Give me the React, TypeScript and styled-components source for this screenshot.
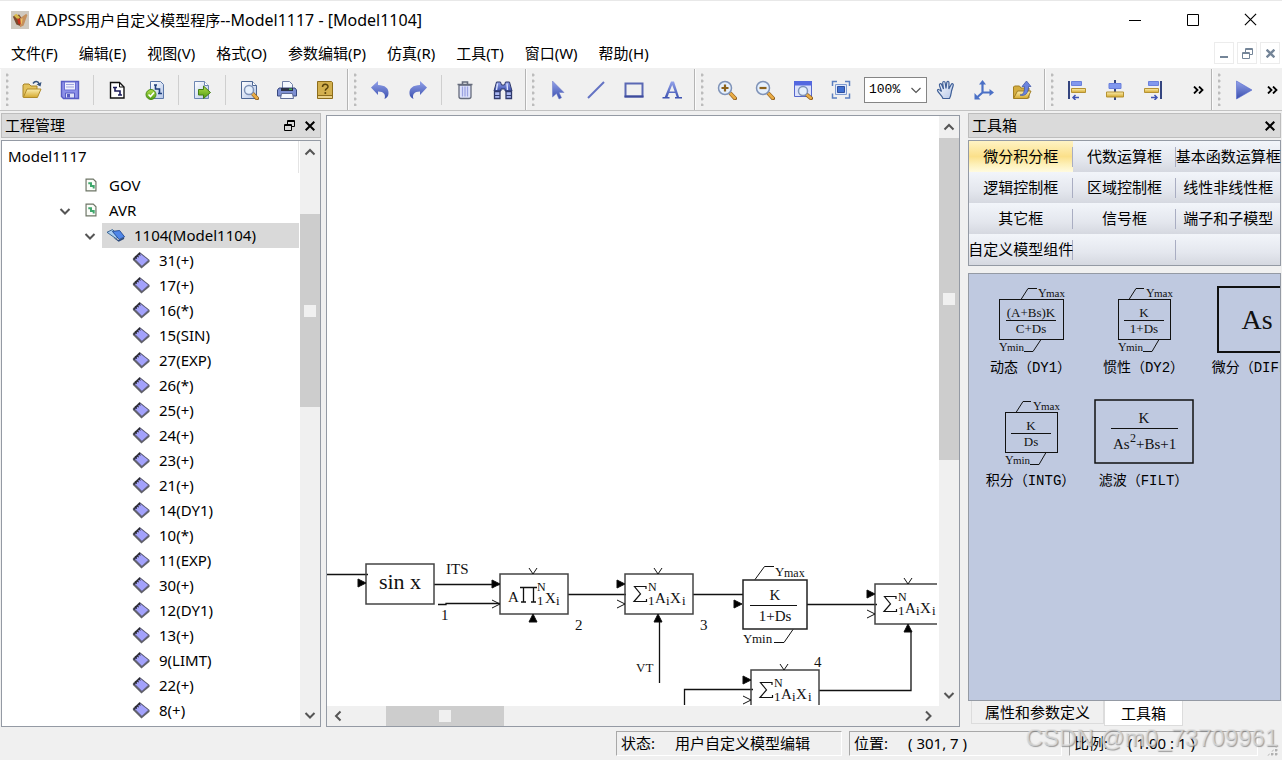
import React from 'react';
import styled, { createGlobalStyle, css } from 'styled-components';

const ui = '"Noto Sans", "Noto Sans CJK SC", sans-serif';
const mono = '"Liberation Mono", "Noto Sans CJK SC", monospace';
const serif = '"Liberation Serif", "Noto Sans CJK SC", serif';

const GlobalStyle = createGlobalStyle`
  *, *::before, *::after { box-sizing: border-box; }
  html, body, #root { height: 100%; }
  body { margin: 0; background: #f0f0f0; color: #000; font: 15px/20px ${ui}; }
  button { font: inherit; color: inherit; padding: 0; border: 0; background: none; }
  ul { list-style: none; margin: 0; padding: 0; }
`;

/* ---------- shell ---------- */

const Window = styled.div`
  display: flex;
  flex-direction: column;
  height: 100%;
  min-width: 960px;
  overflow: hidden;
`;

const TitleBar = styled.header`
  display: flex;
  align-items: center;
  flex: none;
  height: 40px;
  padding: 0 6px 2px 11px;
  gap: 7px;
  background: #fff;
  border-top: 1px solid #e8e8e8;
`;

const Title = styled.h1`
  flex: 1;
  margin: 0;
  font-size: 16px;
  font-weight: 400;
  white-space: nowrap;
`;

const TitleHan = styled.span`
  font-size: 15px;
`;

const CaptionButton = styled.button`
  display: flex;
  align-items: center;
  justify-content: center;
  width: 51px;
  height: 36px;
`;

const MenuBar = styled.nav`
  display: flex;
  align-items: center;
  flex: none;
  height: 29px;
  padding: 0 2px 2px 0;
  background: #fff;
  border-bottom: 1px solid #f0f0f0;
`;

const MenuItem = styled.button`
  padding: 0 11px 0 10px;
  white-space: nowrap;
  &:first-child { padding-left: 11px; }
`;

const MdiButtons = styled.div`
  display: flex;
  gap: 3px;
  margin-left: auto;
`;

const MdiButton = styled.button`
  display: flex;
  align-items: center;
  justify-content: center;
  width: 20px;
  height: 22px;
  border: 1px solid #ececec;
`;

/* ---------- tool bar ---------- */

const ToolBar = styled.div`
  display: flex;
  flex: none;
  height: 42px;
  background: #f0f0f0;
  border-bottom: 1px solid #c2c2c2;
`;

const ToolGroup = styled.div<{ $fill?: boolean; $last?: boolean }>`
  display: flex;
  align-items: center;
  flex: ${p => (p.$fill ? '1' : 'none')};
  padding-right: ${p => (p.$last ? '0' : '3px')};
  border-right: ${p => (p.$last ? '0' : '1px solid #b4b4b4')};
  border-left: 1px solid #fbfbfb;
`;

const Grip = styled.span`
  width: 3px;
  height: 33px;
  margin: 0 4px 0 5px;
  background: radial-gradient(circle at 1px 2px, #bcbcbc 1px, transparent 2px) 0 0 / 3px 6px;
`;

const ToolButton = styled.button`
  display: flex;
  align-items: center;
  justify-content: center;
  width: 38px;
  height: 36px;
`;

const ToolDivider = styled.span`
  width: 1px;
  height: 30px;
  margin: 0 4px;
  background: #cfcfcf;
`;

const Extension = styled.button`
  display: flex;
  align-items: center;
  justify-content: center;
  width: 19px;
  height: 36px;
  margin-left: auto;
`;

const ZoomField = styled.label`
  display: grid;
  align-items: center;
  width: 63px;
  height: 26px;
  margin: 0 0 0 4px;
  background: #fff;
  border: 1px solid #858585;
  > * { grid-area: 1 / 1; }
  svg { justify-self: end; margin-right: 4px; pointer-events: none; }
`;

const ZoomSelect = styled.select`
  appearance: none;
  width: 100%;
  height: 24px;
  padding: 0 20px 0 4px;
  border: 0;
  background: transparent;
  color: #000;
  font: 13px/20px ${mono};
`;

/* ---------- docks ---------- */

const Workspace = styled.main`
  display: grid;
  grid-template-columns: 320px minmax(0, 1fr) 313px;
  flex: 1;
  min-height: 0;
  padding: 2px 1px 0;
`;

const Dock = styled.section`
  display: flex;
  flex-direction: column;
  min-width: 0;
  min-height: 0;
`;

const DockHeader = styled.header`
  display: flex;
  align-items: center;
  flex: none;
  gap: 10px;
  height: 25px;
  padding: 0 5px 0 3px;
  margin-bottom: 2px;
  background: #dadada;
  border: 1px solid #bdbdbd;
`;

const DockTitle = styled.h2`
  flex: 1;
  margin: 0;
  padding-bottom: 2px;
  font-size: 15px;
  font-weight: 400;
`;

const DockButton = styled.button`
  display: flex;
`;

const frame = css`
  border: 1px solid #949aa4;
`;

const TreeFrame = styled.div`
  display: flex;
  flex: 1;
  min-height: 0;
  background: #fff;
  ${frame}
`;

const TreeBody = styled.div`
  flex: 1;
  min-width: 0;
  padding-right: 1px;
  overflow: hidden;
`;

const TreeHeading = styled.div`
  height: 32px;
  padding: 5px 6px;
  border-right: 1px solid #e4e4e4;
`;

const TreeRow = styled.li<{ $level: number }>`
  display: flex;
  height: 25px;
  padding-left: ${p => p.$level * 25 + 25}px;
`;

const Expander = styled.span`
  display: flex;
  align-items: center;
  justify-content: center;
  width: 25px;
`;

const TreeNode = styled.button<{ $selected?: boolean }>`
  display: flex;
  align-items: center;
  flex: 1;
  gap: 4px;
  padding-bottom: 1px;
  background: ${p => (p.$selected ? '#d9d9d9' : 'transparent')};
`;

const NodeIcon = styled.span`
  display: flex;
  justify-content: center;
  width: 28px;
`;

/* ---------- scroll bars ---------- */

const Bar = styled.div<{ $horizontal?: boolean }>`
  display: flex;
  flex: none;
  flex-direction: ${p => (p.$horizontal ? 'row' : 'column')};
  ${p => (p.$horizontal ? 'height: 20px;' : 'width: 20px;')}
  background: #f0f0f0;
`;

const BarButton = styled.button`
  display: flex;
  align-items: center;
  justify-content: center;
  flex: 0 0 22px;
`;

const BarSpace = styled.span<{ $part: number }>`
  flex: ${p => p.$part} 1 0;
`;

const BarThumb = styled(BarSpace)`
  display: flex;
  align-items: center;
  justify-content: center;
  background: #cdcdcd;
  &::after {
    content: '';
    width: 12px;
    height: 12px;
    background: #f0f0f0;
  }
`;

/* ---------- diagram ---------- */

const CanvasFrame = styled.section`
  display: grid;
  grid-template: minmax(0, 1fr) 20px / minmax(0, 1fr) 20px;
  margin: 2px 8px 0 5px;
  min-height: 0;
  background: #fff;
  ${frame}
`;

const Sheet = styled.div`
  overflow: hidden;
  min-height: 0;
  svg { display: block; }
`;

const Corner = styled.span`
  background: #f0f0f0;
`;

/* ---------- toolbox ---------- */

const CategoryGrid = styled.div`
  display: grid;
  grid-template-columns: repeat(3, minmax(0, 1fr));
  grid-auto-rows: 31px;
  flex: none;
  ${frame}
`;

const plain = 'linear-gradient(#f2f5fa, #e4e7ee 60%, #d5d8e0)';
const lit = 'linear-gradient(#fff3c4, #fbe08a 50%, #fdf0b8 75%, #fffbe0)';

const Category = styled.button<{ $active?: boolean }>`
  display: flex;
  align-items: center;
  justify-content: center;
  padding-bottom: 2px;
  white-space: nowrap;
  background: ${p => (p.$active ? lit : plain)};
  &:not(:nth-child(3n)) {
    background:
      linear-gradient(#a9adc2, #a9adc2) right center / 1px 20px no-repeat,
      ${p => (p.$active ? lit : plain)};
  }
`;

const Palette = styled.div`
  display: grid;
  grid-template-columns: repeat(3, 113px);
  align-content: start;
  row-gap: 21px;
  flex: 1;
  min-height: 0;
  margin-top: 7px;
  padding: 12px 0 0 5px;
  overflow: hidden;
  background: #bfc9e0;
  ${frame}
`;

const PaletteItem = styled.button`
  display: flex;
  flex-direction: column;
  align-items: center;
  gap: 4px;
  font: 14px/20px ${mono};
  white-space: nowrap;
`;

const Tabs = styled.div`
  display: flex;
  align-items: flex-start;
  flex: none;
  height: 26px;
  padding-left: 3px;
`;

const Tab = styled.button<{ $active?: boolean }>`
  height: ${p => (p.$active ? '25px' : '23px')};
  padding: ${p => (p.$active ? '0 16px' : '0 13px')};
  background: ${p => (p.$active ? '#fff' : '#f0f0f0')};
  border: 1px solid #dcdcdc;
  border-top: 0;
`;

/* ---------- status bar ---------- */

const StatusBar = styled.footer`
  position: relative;
  display: flex;
  justify-content: flex-end;
  align-items: flex-start;
  flex: none;
  height: 33px;
  padding: 4px 24px 0 0;
  gap: 7px;
`;

const StatusPane = styled.div<{ $width: number }>`
  display: flex;
  gap: 20px;
  width: ${p => p.$width}px;
  height: 25px;
  padding: 1px 4px;
  white-space: nowrap;
  border: 1px solid #fff;
  border-top-color: #a8a8a8;
  border-left-color: #a8a8a8;
`;

const Watermark = styled.span`
  position: absolute;
  right: 4px;
  top: -2px;
  font: 24px/26px "Liberation Sans", sans-serif;
  color: rgba(224, 224, 224, 0.7);
  text-shadow: 1px 1px 1px rgba(120, 120, 120, 0.7);
  white-space: nowrap;
`;

const SizeGrip = styled.span`
  position: absolute;
  right: 4px;
  bottom: 4px;
  width: 11px;
  height: 11px;
  background: radial-gradient(circle at 1px 1px, #b0b0b0 1px, transparent 2px) 0 0 / 4px 4px;
  clip-path: polygon(100% 0, 100% 100%, 0 100%);
`;

/* ---------- icons ---------- */

const HiddenDefs = styled.svg`
  position: absolute;
`;

const Gradients = () => (
  <HiddenDefs width="0" height="0" aria-hidden="true">
    <defs>
      <linearGradient id="blue" x1="0" y1="0" x2="0" y2="1">
        <stop offset="0" stopColor="#93a2ea" />
        <stop offset="1" stopColor="#3a4fae" />
      </linearGradient>
      <linearGradient id="gold" x1="0" y1="0" x2="0" y2="1">
        <stop offset="0" stopColor="#fbeeb0" />
        <stop offset="1" stopColor="#d5a92e" />
      </linearGradient>
      <linearGradient id="paper" x1="0" y1="0" x2="1" y2="1">
        <stop offset="0" stopColor="#ffffff" />
        <stop offset="1" stopColor="#b4c6e8" />
      </linearGradient>
      <linearGradient id="green" x1="0" y1="0" x2="0" y2="1">
        <stop offset="0" stopColor="#b2e04a" />
        <stop offset="1" stopColor="#4e9a12" />
      </linearGradient>
    </defs>
  </HiddenDefs>
);

const Lens = ({ x, y, r, children }: { x: number; y: number; r: number; children?: React.ReactNode }) => (
  <>
    <path d={`M${x + r - 1} ${y + r - 1}L18 18.3`} stroke="#8a5a1c" strokeWidth="4" strokeLinecap="round" />
    <path d={`M${x + r - 1} ${y + r - 1}L17.8 18`} stroke="#e9ac45" strokeWidth="2.6" strokeLinecap="round" />
    <circle cx={x} cy={y} r={r} fill="#e6f0fc" stroke="#7f93b8" strokeWidth="1.5" />
    {children}
  </>
);

const glyphs: Record<string, React.ReactNode> = {
  open: (
    <>
      <path d="M1 17V5l1-1h5l2 2h6v3" fill="#e3c25c" stroke="#a88427" />
      <path d="M1.3 17.5 5 9h14l-3.6 8.5z" fill="url(#gold)" stroke="#b08b2a" />
      <path d="M11 3.5c2-3 5-2.500 6.200.5" fill="none" stroke="#34527e" strokeWidth="1.500" />
      <path d="m19.500 2-1 4.500-4-2z" fill="#34527e" />
    </>
  ),
  save: (
    <>
      <path d="M1.500 1.500h17v17h-15l-2-2z" fill="#8c90e8" stroke="#575cc4" strokeWidth="1.400" />
      <path d="M4.500 2h11v8h-11z" fill="#eef0fc" stroke="#6b70d2" />
      <path d="M6 4.500h8M6 7h8" stroke="#a0a5df" />
      <path d="M5.500 13h9v5h-9z" fill="#dfe2f8" stroke="#575cc4" />
      <path d="M7 14h3v3.500H7z" fill="#575cc4" />
    </>
  ),
  model: (
    <>
      <path d="M3.500 2.500h9l4.500 4.500v11H3.500z" fill="#fff" stroke="#111" strokeWidth="1.400" />
      <path d="M12.500 2.500V7H17" fill="none" stroke="#111" />
      <path d="M6 7.500h4M8 7.500v3.500h5v4M11 15h4" fill="none" stroke="#1c1c5c" strokeWidth="1.600" />
    </>
  ),
  check: (
    <>
      <path d="M5.500 1.500h10l3 3v14h-13z" fill="url(#paper)" stroke="#5b77a8" />
      <path d="M9 5h3M10.500 5v4h4v4M13 13.500h4" fill="none" stroke="#20407c" strokeWidth="1.600" />
      <circle cx="6" cy="14.500" r="5" fill="url(#green)" stroke="#4b8c1c" />
      <path d="m3.500 14.500 2 2 3.500-4" fill="none" stroke="#fff" strokeWidth="1.600" />
    </>
  ),
  export: (
    <>
      <path d="M2.500 1.500h10l4 4v13h-14z" fill="url(#paper)" stroke="#6d86b3" />
      <path d="M12.500 1.500v4h4" fill="#fff" stroke="#6d86b3" />
      <path d="M6.500 9.500h5V6l7 6.500-7 6V15h-5z" fill="url(#green)" stroke="#437d14" />
    </>
  ),
  preview: (
    <>
      <path d="M2.500 1.500h11l4 4v13h-15z" fill="url(#paper)" stroke="#4d6794" />
      <path d="M13.500 1.500v4h4" fill="#fff" stroke="#4d6794" />
      <Lens x={10} y={10} r={4.5} />
    </>
  ),
  print: (
    <>
      <path d="M5.500 8V1.500h7l3 3V8" fill="#f4f7ff" stroke="#7280a8" />
      <path d="M2 8h16l1.500 2v6h-19v-6z" fill="#7d8fd2" stroke="#39497f" />
      <path d="M4 8h12v3H4z" fill="#2c3247" />
      <path d="M12 9.200h3" stroke="#50e060" />
      <path d="M4.500 13.500h11l1 5h-13z" fill="#f4f7ff" stroke="#5c6a96" />
    </>
  ),
  help: (
    <>
      <path d="M2.500 1.500h14l1 1v16h-15z" fill="#d3b04e" stroke="#8d6d1b" />
      <path d="M3 15.500h14" stroke="#8d6d1b" />
      <path d="M3 17h14" stroke="#fff0bf" />
      <path d="M7.500 7c0-3.500 5.500-3.500 5.500-.3 0 2-2.700 2-2.700 4" fill="none" stroke="#5a430b" strokeWidth="1.500" />
      <circle cx="10.300" cy="13" r="1" fill="#5a430b" />
    </>
  ),
  undo: <path d="M1 7.500 8 1v4c7 0 11 3.500 10.500 8.500 0 2.500-1.500 4.500-4 5.500 1.500-4-.5-7.500-6.500-7.500V15z" fill="url(#blue)" />,
  redo: <path d="M19 7.500 12 1v4C5 5 1 8.500 1.500 13.500c0 2.500 1.500 4.500 4 5.500-1.500-4 .5-7.500 6.500-7.500V15z" fill="url(#blue)" />,
  trash: (
    <>
      <path d="M4 5h12v11.500q0 2-2 2H6q-2 0-2-2z" fill="#dfe3fb" stroke="#666c7c" strokeWidth="1.300" />
      <path d="M7.500 6.500v10M10 6.500v10M12.500 6.500v10" stroke="#9aa2e0" strokeWidth="1.300" />
      <path d="M2.500 4.500h15M7.500 4V2h5v2" fill="none" stroke="#666c7c" strokeWidth="1.600" />
    </>
  ),
  find: (
    <>
      <path d="M3.500 2h4l1 3h3l1-3h4l2.500 9H12V9H8v2H1z" fill="url(#blue)" stroke="#303a6c" />
      <path d="M1.500 11.500H7v7H1.500zM13 11.500h5.500v7H13z" fill="#a9b6f2" stroke="#303a6c" strokeWidth="1.300" />
      <path d="M4.500 3.500 3.500 10M14 3.500l.5 6.500" stroke="#dde3ff" strokeWidth="1.400" />
      <path d="M1.500 15.500H7M13 15.500h5.500" stroke="#303a6c" />
    </>
  ),
  pointer: <path d="M4.500 1v16l4-3.500 2.500 5.500 2.500-1.200-2.500-5.300h5z" fill="url(#blue)" stroke="#6877c4" strokeWidth=".5" />,
  line: <path d="M2 18 18 2" stroke="#6372c3" strokeWidth="2" />,
  rect: (
    <>
      <path d="M1.500 3.500h17v13h-17z" fill="none" stroke="#5a68b4" strokeWidth="2" />
      <path d="M.5 16.500h19" stroke="#3d4b9c" strokeWidth="2" />
    </>
  ),
  letter: <path d="M9 1.500h3l5 15.500H20v1.500h-7V17h1.700L13.300 13H7l-1.500 4h2v1.500H.5V17h2.300zM10.200 5 7.500 11.500h5.200z" fill="url(#blue)" />,
  zoomIn: (
    <Lens x={8} y={8} r={6.5}>
      <path d="M4.500 8h7M8 4.500v7" stroke="#8c621c" strokeWidth="2.200" />
    </Lens>
  ),
  zoomOut: (
    <Lens x={8} y={8} r={6.5}>
      <path d="M4.500 8h7" stroke="#8c621c" strokeWidth="2.200" />
    </Lens>
  ),
  zoomPage: (
    <>
      <path d="M1.500 1.500h17v15h-17z" fill="#dce2fb" stroke="#5566cc" />
      <path d="M1 1h18v4.500H1z" fill="#5468e0" />
      <Lens x={10} y={11} r={4.5} />
    </>
  ),
  fit: (
    <>
      <path d="M4.500 4.500h11v10h-11z" fill="#dfe9fb" stroke="#7f9bd0" />
      <path d="M6.500 6.500h7v6h-7z" fill="#3f6fd0" stroke="#2f4f9e" />
      <path d="M1.500 6V1.500H6M14 1.500h4.500V6M18.500 13.500V18H14M6 18H1.500v-4.500" fill="none" stroke="#5b7fc0" strokeWidth="1.500" />
    </>
  ),
  hand: (
    <path
      d="M7 18.500c-1-3-5-6-5.500-8 0-1.500 1.500-1.500 4 1L3.500 5.500c-.5-2 1.500-2.500 2.200-.8L7.500 9 6.700 3c0-2 2.300-2 2.500 0L10 8.500l.8-6c.3-1.800 2.300-1.500 2.200.3L12.800 9l2.400-4.500c.9-1.500 2.500-.6 2 1L15.500 11c-.5 3-.5 5-2 7.500z"
      fill="url(#paper)"
      stroke="#3f5f97"
      strokeWidth="1.200"
    />
  ),
  axes: (
    <g fill="#4b70c6" stroke="#4b70c6">
      <path d="M8.500 4v8.500H16M8.500 12.500 3.500 17" fill="none" strokeWidth="2.200" />
      <path d="M8.500 0 12 4.500H5zM20 12.500 15.500 16V9zM.5 19.500v-6.500l6 6.500z" stroke="none" />
    </g>
  ),
  loadUp: (
    <>
      <path d="M1.500 18V7l1-1h5l1.500 2h8v10z" fill="#d4ad3f" stroke="#a17e22" />
      <path d="m1.500 18.500 4-7.500H19l-3.500 7.500z" fill="url(#gold)" stroke="#a17e22" />
      <path d="M8 15c3.500 0 4.500-3 4.500-8.500H10L14.500 1 19 6.500h-2.500C16.500 13.500 13 16.500 8 15z" fill="#6b84de" stroke="#3a50a4" strokeWidth=".7" />
    </>
  ),
  alignLeft: (
    <>
      <path d="M2 1v18" stroke="#34457f" strokeWidth="2" />
      <path d="M4.500 1.500h10v4h-10z" fill="#8198ee" stroke="#6a80dc" />
      <path d="M4.500 8.500h14v4h-14z" fill="url(#gold)" stroke="#b59232" />
      <path d="M12 17.500H6M8.500 15 6 17.500 8.500 20" fill="none" stroke="#3f55b4" strokeWidth="1.500" />
    </>
  ),
  alignCenter: (
    <>
      <path d="M10 0v20" stroke="#34457f" strokeWidth="2" />
      <path d="M4 3.500h12v5H4z" fill="#8198ee" stroke="#6a80dc" />
      <path d="M1.500 12h17v5h-17z" fill="url(#gold)" stroke="#b59232" />
    </>
  ),
  alignRight: (
    <>
      <path d="M18 1v18" stroke="#34457f" strokeWidth="2" />
      <path d="M5.500 1.500h10v4h-10z" fill="#8198ee" stroke="#6a80dc" />
      <path d="M1.500 8.500h14v4h-14z" fill="url(#gold)" stroke="#b59232" />
      <path d="M8 17.500h6M11.500 15l2.500 2.500-2.500 2.500" fill="none" stroke="#3f55b4" strokeWidth="1.500" />
    </>
  ),
  play: <path d="M2.500 1 18 10 2.500 19z" fill="url(#blue)" stroke="#5468d0" strokeWidth=".6" />,
  app: (
    <>
      <path d="M0 0h20v20H0z" fill="#cfc9bf" />
      <path d="m2 6 7-2 3 4-1 9-5-2z" fill="#7a4a2c" />
      <path d="m10 8 7-5 1 2-4 11-4 2z" fill="#c5905c" />
      <path d="m3 5 3-2 4 4-2 3z" fill="#d9b94c" />
      <path d="m7 8 3 1 1 6-3-1z" fill="#c8301c" />
      <path d="m11 9 2-1-1 6-1 1z" fill="#f0c060" />
    </>
  ),
  page: (
    <>
      <path d="M4.500 3.500h8l3 3v10h-11z" fill="#fbfdf9" stroke="#6c7465" strokeWidth="1.300" />
      <path d="M7 8h3v3h3v3" fill="none" stroke="#3fa76c" strokeWidth="2.200" />
    </>
  ),
  books: (
    <>
      <path d="m0 7 6-3 8 7-4 3z" fill="#a8cdf0" stroke="#2e5a8c" />
      <path d="m6 6 8-1 5.500 7-6 3z" fill="#4f86e8" stroke="#23488f" />
      <path d="m7 13 6 2.500 6-3v2l-6 3z" fill="#2c4a7c" />
    </>
  ),
  block: (
    <>
      <path d="M8.500 1 1 8v2l9.500 9.500L19.500 12v-2z" fill="#606068" />
      <path d="M9 2.500 18.500 10 11 17 2.500 8.500z" fill="#a3a2fb" stroke="#5a5a78" strokeWidth=".8" />
      <path d="m3.500 6 1.800 2.500M5.500 4.500l1.800 2.500M7.500 2.500l1.800 2.500M2 9.500 9 2" stroke="#26262c" strokeWidth="1.200" />
    </>
  ),
};

const Icon = ({ name, size = 20 }: { name: string; size?: number }) => (
  <svg width={size} height={size} viewBox="0 0 20 20" fill="none" aria-hidden="true">
    {glyphs[name]}
  </svg>
);

const angles = { up: 'M1.500 8.500 6 4l4.500 4.500', down: 'M1.500 4 6 8.500 10.500 4', left: 'M8.500 1.500 4 6l4.500 4.500', right: 'M4 1.500 8.500 6 4 10.500' };

const Chevron = ({ to, weight = 2 }: { to: keyof typeof angles; weight?: number }) => (
  <svg width="12" height="12" viewBox="0 0 12 12" fill="none" aria-hidden="true">
    <path d={angles[to]} stroke="#555" strokeWidth={weight} />
  </svg>
);

const CloseMark = ({ size = 10, color = '#000', weight = 2 }: { size?: number; color?: string; weight?: number }) => (
  <svg width={size} height={size} viewBox="0 0 10 10" aria-hidden="true">
    <path d="m.7.7 8.600 8.600M9.300.7.700 9.300" stroke={color} strokeWidth={weight} />
  </svg>
);

const RestoreMark = ({ color = '#000' }: { color?: string }) => (
  <svg width="11" height="11" viewBox="0 0 11 11" fill="none" stroke={color} aria-hidden="true">
    <path d="M3.500 4V.5h7v6H8" />
    <path d="M3 1.500h8M.5 4.500h7v6h-7zM0 5.500h8" />
  </svg>
);

const MoreMark = () => (
  <svg width="11" height="8" viewBox="0 0 11 8" fill="none" aria-hidden="true">
    <path d="m1 .5 3.500 3.500L1 7.500M6 .5 9.500 4 6 7.500" stroke="#000" strokeWidth="1.800" />
  </svg>
);

const ScrollBar = ({ parts, horizontal }: { parts: [number, number, number]; horizontal?: boolean }) => (
  <Bar $horizontal={horizontal}>
    <BarButton aria-label={horizontal ? '向左' : '向上'}><Chevron to={horizontal ? 'left' : 'up'} /></BarButton>
    <BarSpace $part={parts[0]} />
    <BarThumb $part={parts[1]} />
    <BarSpace $part={parts[2]} />
    <BarButton aria-label={horizontal ? '向右' : '向下'}><Chevron to={horizontal ? 'right' : 'down'} /></BarButton>
  </Bar>
);

/* ---------- diagram parts ---------- */

const Drawing = styled.svg`
  fill: none;
  stroke: #111;
  font-family: ${serif};
  text {
    fill: #111;
    stroke: none;
  }
`;

const T = ({ x, y, s, mid, children }: { x: number; y: number; s: number; mid?: boolean; children: string }) => (
  <text x={x} y={y} fontSize={s} textAnchor={mid ? 'middle' : 'start'}>{children}</text>
);

const Solid = ({ x, y }: { x: number; y: number }) => <path d={`M${x - 8} ${y - 4}L${x} ${y}l-8 4z`} fill="#000" />;
const Open = ({ x, y }: { x: number; y: number }) => <path d={`M${x - 8} ${y - 4}L${x} ${y}l-8 4`} />;
const UpSolid = ({ x, y }: { x: number; y: number }) => <path d={`M${x} ${y}l4 8h-8z`} fill="#000" />;
const DownOpen = ({ x, y }: { x: number; y: number }) => <path d={`M${x - 4} ${y - 6}l4 6 4-6`} />;

const OpBlock = ({ x, y, product, up = true }: { x: number; y: number; product?: boolean; up?: boolean }) => (
  <g transform={`translate(${x} ${y})`}>
    <rect width="68" height="40" stroke="#444" strokeWidth="1.500" />
    <DownOpen x={33} y={0} />
    {up && <UpSolid x={33} y={40} />}
    <Solid x={0} y={10} />
    <Open x={0} y={30} />
    {product ? (
      <>
        <T x={8} y={28} s={15}>A</T>
        <path d="M20 13.500h17M23.500 13.500V28M33.500 13.500V28M21 28h5M31 28h5" strokeWidth="1.300" />
        <T x={37} y={17} s={12}>N</T>
        <T x={37} y={31} s={13}>1</T>
        <T x={45} y={29} s={15}>X</T>
        <T x={56} y={31} s={13}>i</T>
      </>
    ) : (
      <>
        <path d="M21 15v-2.500H9.500L15.500 20 9 27.500h12.500V25" strokeWidth="1.200" />
        <T x={23} y={17} s={12}>N</T>
        <T x={23} y={31} s={13}>1</T>
        <T x={30} y={29} s={15}>A</T>
        <T x={41} y={31} s={13}>i</T>
        <T x={45} y={29} s={15}>X</T>
        <T x={57} y={31} s={13}>i</T>
      </>
    )}
  </g>
);

const Diagram = () => (
  <Drawing width="610" height="589" viewBox="327 116 610 589" role="img" aria-label="Model1104">
    <path d="M327 574.500h41M434 584.500h66M438 604.500h8v-1h54M568 594.500h58M693 594.500h50M807 604.500h70M819 690.500h92V632M684.500 706v-16.500H753M659.500 683v-61" strokeWidth="1.300" />
    <rect x="366" y="564" width="68" height="40" stroke="#444" strokeWidth="1.500" />
    <Solid x={366} y={583} />
    <T x={400} y={589} s={22} mid>sin x</T>
    <T x={446} y={574} s={15}>ITS</T>
    <T x={441} y={620} s={15}>1</T>
    <OpBlock x={500} y={574} product />
    <T x={575} y={630} s={15}>2</T>
    <OpBlock x={625} y={574} />
    <T x={700} y={630} s={15}>3</T>
    <T x={636} y={672} s={13}>VT</T>
    <rect x="743" y="580" width="64" height="49" stroke="#222" strokeWidth="1.500" />
    <Solid x={742} y={604} />
    <path d="M755 579.500 764.500 566.500H774M774 642.500h10l9-13" />
    <T x={775} y={576} s={13}>Y</T>
    <T x={784} y={577} s={12}>max</T>
    <T x={775} y={600} s={15} mid>K</T>
    <path d="M750 605.500h47" />
    <T x={775} y={621} s={15} mid>1+Ds</T>
    <T x={743} y={643} s={13}>Y</T>
    <T x={752} y={643} s={13}>min</T>
    <OpBlock x={875} y={584} />
    <OpBlock x={751} y={670} up={false} />
    <T x={814} y={667} s={15}>4</T>
  </Drawing>
);

const Limited = ({ left, right, top, bottom }: { left: number; right: number; top: string; bottom: string }) => (
  <Drawing width="100" height="68" viewBox="0 0 100 68" aria-hidden="true">
    <rect x={left + 0.5} y="13.500" width={right - left} height="40" />
    <path d={`M${left + 11} 13.500 ${left + 18} 2.500h8M${left + 25} 65.500h9l7-12`} transform={left < 20 ? 'translate(0 0)' : undefined} />
    <path d={`M${left + 6} 34.500H${right - 6}`} />
    <T x={left + 28} y={11} s={12}>Y</T>
    <T x={left + 36} y={11} s={11}>max</T>
    <T x={left} y={65} s={12}>Y</T>
    <T x={left + 8} y={65} s={11}>min</T>
    <T x={(left + right) / 2} y={31} s={13} mid>{top}</T>
    <T x={(left + right) / 2} y={47} s={13} mid>{bottom}</T>
  </Drawing>
);

const WideLimited = () => (
  <Drawing width="100" height="68" viewBox="0 0 100 68" aria-hidden="true">
    <rect x="18.500" y="13.500" width="64" height="40" />
    <path d="M40 13.500 47 2.500h9M43 65.500h9l8-12M25 34.500h50" />
    <T x={57} y={11} s={12}>Y</T>
    <T x={65} y={11} s={11}>max</T>
    <T x={18} y={65} s={12}>Y</T>
    <T x={26} y={65} s={11}>min</T>
    <T x={50} y={31} s={13} mid>(A+Bs)K</T>
    <T x={50} y={47} s={13} mid>C+Ds</T>
  </Drawing>
);

const paletteItems = [
  { label: '动态（DY1）', art: <WideLimited /> },
  { label: '惯性（DY2）', art: <Limited left={24} right={76} top="K" bottom="1+Ds" /> },
  {
    label: '微分（DIFF）',
    art: (
      <Drawing width="100" height="68" viewBox="0 0 100 68" aria-hidden="true">
        <rect x="11" y="1" width="78" height="65" strokeWidth="2" />
        <T x={50} y={43} s={28} mid>As</T>
      </Drawing>
    ),
  },
  { label: '积分（INTG）', art: <Limited left={24} right={76} top="K" bottom="Ds" /> },
  {
    label: '滤波（FILT）',
    art: (
      <Drawing width="100" height="68" viewBox="0 0 100 68" aria-hidden="true">
        <rect x="1" y="1" width="98" height="63" strokeWidth="1.500" />
        <T x={50} y={24} s={15} mid>K</T>
        <path d="M17 29.500h67" />
        <T x={19} y={50} s={15}>As</T>
        <T x={36} y={43} s={12}>2</T>
        <T x={42} y={50} s={15}>+Bs+1</T>
      </Drawing>
    ),
  },
];

/* ---------- data ---------- */

const menus = ['文件(F)', '编辑(E)', '视图(V)', '格式(O)', '参数编辑(P)', '仿真(R)', '工具(T)', '窗口(W)', '帮助(H)'];

const toolGroups = [
  ['open', 'save', '|', 'model', 'check', '|', 'export', '|', 'preview', 'print', 'help'],
  ['undo', 'redo', '|', 'trash', 'find'],
  ['pointer', 'line', 'rect', 'letter'],
];

const blocks = [
  '31(+)', '17(+)', '16(*)', '15(SIN)', '27(EXP)', '26(*)', '25(+)', '24(+)', '23(+)', '21(+)',
  '14(DY1)', '10(*)', '11(EXP)', '30(+)', '12(DY1)', '13(+)', '9(LIMT)', '22(+)', '8(+)',
];

type Node = { label: string; level: number; icon: string; open?: boolean; selected?: boolean };

const tree: Node[] = [
  { label: 'GOV', level: 1, icon: 'page' },
  { label: 'AVR', level: 1, icon: 'page', open: true },
  { label: '1104(Model1104)', level: 2, icon: 'books', open: true, selected: true },
  ...blocks.map(label => ({ label, level: 3, icon: 'block' })),
];

const categories = [
  '微分积分框', '代数运算框', '基本函数运算框', '逻辑控制框', '区域控制框', '线性非线性框',
  '其它框', '信号框', '端子和子模型', '自定义模型组件', '', '',
];

const Tools = ({ names }: { names: string[] }) => (
  <>
    {names.map((name, i) =>
      name === '|' ? <ToolDivider key={i} /> : <ToolButton key={i} aria-label={name}><Icon name={name} /></ToolButton>
    )}
  </>
);

export default function App() {
  return (
    <Window>
      <GlobalStyle />
      <Gradients />
      <TitleBar>
        <Icon name="app" size={18} />
        <Title>ADPSS<TitleHan>用户自定义模型程序</TitleHan>--Model1117 - [Model1104]</Title>
        <CaptionButton aria-label="最小化">
          <svg width="12" height="12" aria-hidden="true"><path d="M0 6.500h12" stroke="#000" /></svg>
        </CaptionButton>
        <CaptionButton aria-label="最大化">
          <svg width="12" height="12" aria-hidden="true"><path d="M.5.500h11v11H.5z" fill="none" stroke="#000" /></svg>
        </CaptionButton>
        <CaptionButton aria-label="关闭"><CloseMark size={13} weight={0.9} /></CaptionButton>
      </TitleBar>

      <MenuBar>
        {menus.map(m => <MenuItem key={m}>{m}</MenuItem>)}
        <MdiButtons>
          <MdiButton aria-label="最小化子窗口">
            <svg width="8" height="12" aria-hidden="true"><path d="M0 10h8" stroke="#748598" strokeWidth="2" /></svg>
          </MdiButton>
          <MdiButton aria-label="还原子窗口"><RestoreMark color="#748598" /></MdiButton>
          <MdiButton aria-label="关闭子窗口"><CloseMark size={9} color="#748598" weight={2.6} /></MdiButton>
        </MdiButtons>
      </MenuBar>

      <ToolBar>
        {toolGroups.map((names, i) => (
          <ToolGroup key={i}><Grip /><Tools names={names} /></ToolGroup>
        ))}
        <ToolGroup>
          <Grip />
          <Tools names={['zoomIn', 'zoomOut', 'zoomPage', 'fit']} />
          <ZoomField>
            <ZoomSelect aria-label="缩放" defaultValue="100%"><option>100%</option></ZoomSelect>
            <Chevron to="down" weight={1.2} />
          </ZoomField>
          <Tools names={['hand', 'axes', 'loadUp']} />
        </ToolGroup>
        <ToolGroup $fill>
          <Grip />
          <Tools names={['alignLeft', 'alignCenter', 'alignRight']} />
          <Extension aria-label="更多"><MoreMark /></Extension>
        </ToolGroup>
        <ToolGroup $last>
          <Grip />
          <Tools names={['play']} />
          <Extension aria-label="更多"><MoreMark /></Extension>
        </ToolGroup>
      </ToolBar>

      <Workspace>
        <Dock>
          <DockHeader>
            <DockTitle>工程管理</DockTitle>
            <DockButton aria-label="浮动"><RestoreMark /></DockButton>
            <DockButton aria-label="关闭"><CloseMark /></DockButton>
          </DockHeader>
          <TreeFrame>
            <TreeBody>
              <TreeHeading>Model1117</TreeHeading>
              <ul role="tree">
                {tree.map(n => (
                  <TreeRow key={n.label} $level={n.level} role="treeitem">
                    <Expander>{n.open && <Chevron to="down" />}</Expander>
                    <TreeNode $selected={n.selected}>
                      <NodeIcon><Icon name={n.icon} size={18} /></NodeIcon>
                      {n.label}
                    </TreeNode>
                  </TreeRow>
                ))}
              </ul>
            </TreeBody>
            <ScrollBar parts={[51, 193, 296]} />
          </TreeFrame>
        </Dock>

        <CanvasFrame>
          <Sheet><Diagram /></Sheet>
          <ScrollBar parts={[0, 321, 224]} />
          <ScrollBar horizontal parts={[37, 117, 412]} />
          <Corner />
        </CanvasFrame>

        <Dock>
          <DockHeader>
            <DockTitle>工具箱</DockTitle>
            <DockButton aria-label="关闭"><CloseMark /></DockButton>
          </DockHeader>
          <CategoryGrid>
            {categories.map((c, i) => <Category key={i} $active={i === 0}>{c}</Category>)}
          </CategoryGrid>
          <Palette>
            {paletteItems.map(p => <PaletteItem key={p.label}>{p.art}{p.label}</PaletteItem>)}
          </Palette>
          <Tabs role="tablist">
            <Tab role="tab">属性和参数定义</Tab>
            <Tab role="tab" aria-selected $active>工具箱</Tab>
          </Tabs>
        </Dock>
      </Workspace>

      <StatusBar>
        <StatusPane $width={226}><span>状态:</span><span>用户自定义模型编辑</span></StatusPane>
        <StatusPane $width={213}><span>位置:</span><span>( 301, 7 )</span></StatusPane>
        <StatusPane $width={189}><span>比例:</span><span>( 1.00 : 1 )</span></StatusPane>
        <Watermark>CSDN @m0_73709961</Watermark>
        <SizeGrip />
      </StatusBar>
    </Window>
  );
}
